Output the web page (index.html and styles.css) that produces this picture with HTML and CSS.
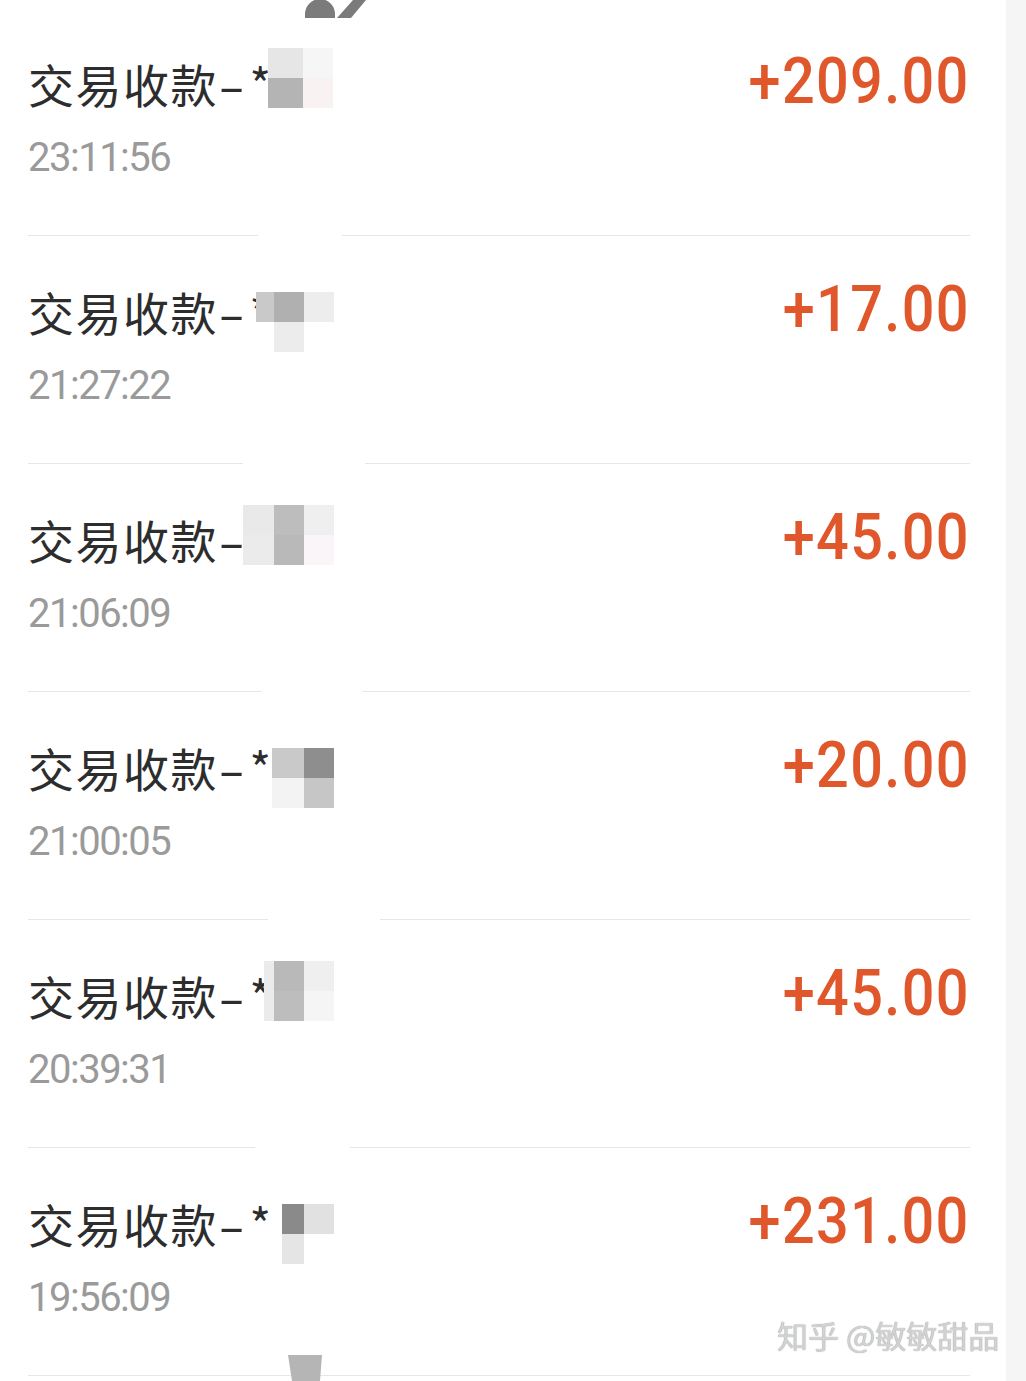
FILE: index.html
```html
<!DOCTYPE html>
<html lang="zh-CN">
<head>
  <meta charset="UTF-8">
  <meta name="viewport" content="width=device-width, initial-scale=1.0">
  <title>交易记录</title>
  <link rel="stylesheet" href="styles.css">
</head>
<body>
  <div class="page">
    <main class="list">
      <div class="item">
        <div class="info">
          <div class="title">
            <span class="name">交易收款<span class="dash">-</span>*</span>
            <span class="mosaic m1">
              <i class="c-e6"></i><i class="c-f6"></i>
              <i class="c-b4"></i><i class="c-f8p"></i>
            </span>
          </div>
          <div class="time">23:11:56</div>
        </div>
        <div class="amount">+209.00</div>
        <span class="gap g1"></span>
      </div>

      <div class="item">
        <div class="info">
          <div class="title">
            <span class="name">交易收款<span class="dash">-</span>*</span>
            <span class="mosaic m2">
              <i class="c-c9"></i><i class="c-b0"></i><i class="c-ed"></i>
              <i></i><i class="c-ec"></i><i></i>
            </span>
          </div>
          <div class="time">21:27:22</div>
        </div>
        <div class="amount">+17.00</div>
        <span class="gap g2"></span>
      </div>

      <div class="item">
        <div class="info">
          <div class="title">
            <span class="name">交易收款<span class="dash">-</span>*</span>
            <span class="mosaic m3">
              <i class="c-e9"></i><i class="c-bd"></i><i class="c-ef"></i>
              <i class="c-eb"></i><i class="c-b9"></i><i class="c-f9p"></i>
            </span>
          </div>
          <div class="time">21:06:09</div>
        </div>
        <div class="amount">+45.00</div>
        <span class="gap g3"></span>
      </div>

      <div class="item">
        <div class="info">
          <div class="title">
            <span class="name">交易收款<span class="dash">-</span>*</span>
            <span class="mosaic m4">
              <i class="c-c9"></i><i class="c-8e"></i>
              <i class="c-f3"></i><i class="c-c6"></i>
            </span>
          </div>
          <div class="time">21:00:05</div>
        </div>
        <div class="amount">+20.00</div>
        <span class="gap g4"></span>
      </div>

      <div class="item">
        <div class="info">
          <div class="title">
            <span class="name">交易收款<span class="dash">-</span>*</span>
            <span class="mosaic m5">
              <i class="c-eb"></i><i class="c-b9"></i><i class="c-ef"></i>
              <i class="c-eb"></i><i class="c-bd"></i><i class="c-f5"></i>
            </span>
          </div>
          <div class="time">20:39:31</div>
        </div>
        <div class="amount">+45.00</div>
        <span class="gap g5"></span>
      </div>

      <div class="item">
        <div class="info">
          <div class="title">
            <span class="name">交易收款<span class="dash">-</span>*</span>
            <span class="mosaic m6">
              <i class="c-8a"></i><i class="c-e1"></i>
              <i class="c-e5"></i><i></i>
            </span>
          </div>
          <div class="time">19:56:09</div>
        </div>
        <div class="amount">+231.00</div>
      </div>
    </main>
    <aside class="strip"></aside>
  </div>

  <!-- bits of neighbouring blurred names cut by the crop -->
  <svg class="blot blot-top" width="70" height="20" viewBox="0 0 70 20">
    <path d="M0 18 L0 14 A15 15 0 0 1 30 14 L30 18 Z" fill="#7b7b7b"/>
    <path d="M32 18 L48 0 L61 0 L46 18 Z" fill="#7b7b7b"/>
  </svg>
  <svg class="blot blot-bottom" width="36" height="26" viewBox="0 0 36 26">
    <path d="M0 0 L34 0 L32 26 L4 26 Z" fill="#b5b5b5"/>
  </svg>

  <div class="watermark">知乎 @敏敏甜品</div>
</body>
</html>
```

FILE: styles.css
```css
body {
  margin: 0;
  background: #fff;
  font-family: "Noto Sans CJK SC", "Noto Sans", sans-serif;
}
.page {
  display: flex;
  min-height: 1381px;
}
.list {
  width: 942px;
  margin-left: 28px;
  padding-top: 8px;
}
.strip {
  margin-left: auto;
  width: 20px;
  background: #f5f5f5;
}
.item {
  position: relative;
  box-sizing: border-box;
  height: 228px;
  padding-top: 52px;
  border-bottom: 1px solid #e6e6e6;
  display: flex;
  align-items: flex-start;
  justify-content: space-between;
}
.title {
  height: 46px;
  display: flex;
  align-items: flex-end;
}
.name {
  width: 238px;
  flex-shrink: 0;
  font-size: 46px;
  line-height: 46px;
  color: #2d2d2d;
  letter-spacing: 1.5px;
  white-space: nowrap;
}
.dash {
  display: inline-block;
  transform: scaleX(1.7);
  margin: 0 8px 0 6px;
}
.time {
  margin-top: 32px;
  font-family: Roboto, "Noto Sans", sans-serif;
  font-size: 40px;
  line-height: 40px;
  letter-spacing: -1.5px;
  color: #9a9a9a;
}
.amount {
  margin-top: -10px;
  font-family: Roboto, "Noto Sans", sans-serif;
  font-weight: 500;
  font-size: 64px;
  line-height: 64px;
  letter-spacing: 1.5px;
  color: #e0572b;
  transform: scaleX(0.9);
  transform-origin: right center;
}
.gap {
  position: absolute;
  bottom: -1px;
  height: 1px;
  background: #fff;
}
.g1 { left: 230px; width: 84px; }
.g2 { left: 215px; width: 122px; }
.g3 { left: 234px; width: 100px; }
.g4 { left: 240px; width: 112px; }
.g5 { left: 227px; width: 95px; }

/* pixelated name */
.mosaic {
  display: grid;
  grid-auto-rows: 30px;
  flex-shrink: 0;
}
.mosaic i {
  display: block;
  background: #fff;
}
.m1 { grid-template-columns: 35px 30px; margin-left: 2px; margin-bottom: -2px; }
.m2 { grid-template-columns: 18px 30px 30px; margin-left: -10px; margin-bottom: -18px; }
.m3 { grid-template-columns: 31px 30px 30px; margin-left: -23px; margin-bottom: -3px; }
.m4 { grid-template-columns: 32px 30px; margin-left: 6px; margin-bottom: -18px; }
.m5 { grid-template-columns: 10px 30px 30px; margin-left: -2px; margin-bottom: -3px; }
.m6 { grid-template-columns: 22px 30px; margin-left: 16px; margin-bottom: -18px; }

.mosaic .c-8a { background: #8a8a8a; }
.mosaic .c-8e { background: #8e8e8e; }
.mosaic .c-b0 { background: #b0b0b0; }
.mosaic .c-b4 { background: #b4b4b4; }
.mosaic .c-b9 { background: #b9b9b9; }
.mosaic .c-bd { background: #bdbdbd; }
.mosaic .c-c6 { background: #c6c6c6; }
.mosaic .c-c9 { background: #c9c9c9; }
.mosaic .c-e1 { background: #e1e1e1; }
.mosaic .c-e5 { background: #e5e5e5; }
.mosaic .c-e6 { background: #e6e6e6; }
.mosaic .c-e9 { background: #e9e9e9; }
.mosaic .c-eb { background: #ebebeb; }
.mosaic .c-ec { background: #ececec; }
.mosaic .c-ed { background: #ededed; }
.mosaic .c-ef { background: #efefef; }
.mosaic .c-f3 { background: #f3f3f3; }
.mosaic .c-f5 { background: #f5f5f5; }
.mosaic .c-f6 { background: #f6f6f6; }
.mosaic .c-f8p { background: #f8f2f3; }
.mosaic .c-f9p { background: #f9f5f9; }

.blot {
  position: absolute;
  display: block;
}
.blot-top {
  left: 305px;
  top: 0;
}
.blot-bottom {
  left: 288px;
  top: 1355px;
}
.watermark {
  position: absolute;
  left: 777px;
  top: 1315px;
  font-size: 31px;
  line-height: 40px;
  color: #d2d2d2;
  text-shadow: 0 0 1px #8c8c8c;
  white-space: nowrap;
}
```
